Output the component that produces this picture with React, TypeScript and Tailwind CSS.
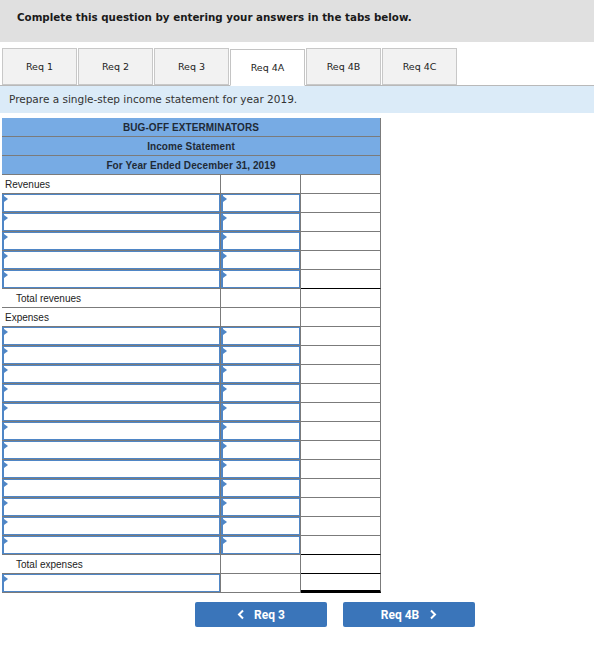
import React from 'react';

type Row =
  | { kind: 'label'; text: string; indent?: boolean; col3?: string }
  | { kind: 'input'; col3?: string }
  | { kind: 'final' };

const tabs = ['Req 1', 'Req 2', 'Req 3', 'Req 4A', 'Req 4B', 'Req 4C'];
const ACTIVE = 'Req 4A';

const rows: Row[] = [
  { kind: 'label', text: 'Revenues' },
  { kind: 'input' },
  { kind: 'input' },
  { kind: 'input' },
  { kind: 'input' },
  { kind: 'input', col3: 'border-b-black' },
  { kind: 'label', text: 'Total revenues', indent: true },
  { kind: 'label', text: 'Expenses' },
  ...Array.from({ length: 11 }, () => ({ kind: 'input' } as Row)),
  { kind: 'input', col3: 'border-b-black' },
  { kind: 'label', text: 'Total expenses', indent: true, col3: 'border-b-black' },
  { kind: 'final' },
];

function InputBox() {
  return (
    <div className="relative h-full w-full border border-l-2 border-[#4f86c6] bg-white">
      <span className="absolute left-0 top-[1px] h-0 w-0 border-y-[3px] border-l-[4px] border-y-transparent border-l-[#4f86c6]" />
    </div>
  );
}

function ChevronLeft() {
  return (
    <svg width="8" height="11" viewBox="0 0 8 11" fill="none">
      <path d="M6 1.5L2 5.5L6 9.5" stroke="white" strokeWidth="2" />
    </svg>
  );
}

function ChevronRight() {
  return (
    <svg width="8" height="11" viewBox="0 0 8 11" fill="none">
      <path d="M2 1.5L6 5.5L2 9.5" stroke="white" strokeWidth="2" />
    </svg>
  );
}

function StatementRow({ row }: { row: Row }) {
  const cell = 'h-[19px] border-b border-[#7b7b7b]';
  if (row.kind === 'label') {
    return (
      <div className="flex">
        <div className={`${cell} w-[219px] border-r flex items-center text-[10px] text-[#222] ${row.indent ? 'pl-[14px]' : 'pl-[3px]'}`}>
          {row.text}
        </div>
        <div className={`${cell} w-[80px] border-r`} />
        <div className={`${cell} w-[80px] border-r ${row.col3 ?? ''}`} />
      </div>
    );
  }
  if (row.kind === 'input') {
    return (
      <div className="flex">
        <div className={`${cell} w-[219px] border-r`}>
          <InputBox />
        </div>
        <div className={`${cell} w-[80px] border-r`}>
          <InputBox />
        </div>
        <div className={`${cell} w-[80px] border-r ${row.col3 ?? ''}`} />
      </div>
    );
  }
  return (
    <div className="flex">
      <div className={`${cell} w-[219px] border-r`}>
        <InputBox />
      </div>
      <div className={`${cell} w-[80px] border-r`} />
      <div className="h-[19px] w-[80px] border-r border-[#7b7b7b] border-b-[3px] border-b-black" />
    </div>
  );
}

export default function App() {
  return (
    <div className="w-[594px] h-[657px] bg-white" style={{ fontFamily: '"Liberation Sans", Arial, sans-serif' }}>
      <div className="h-[42px] bg-[#e0e0e0] pl-[17px] pt-[10px]">
        <p className="text-[10.3px] font-bold text-[#1a1a1a]" style={{ fontFamily: '"DejaVu Sans", Verdana, sans-serif' }}>
          Complete this question by entering your answers in the tabs below.
        </p>
      </div>

      <div className="mt-[7px] flex h-[37px] items-end border-b border-[#b9b9b9] pl-[2px]" style={{ fontFamily: '"DejaVu Sans", Verdana, sans-serif' }}>
        {tabs.map((t) => {
          const active = t === ACTIVE;
          return (
            <div
              key={t}
              className={`mr-px flex h-[37px] w-[75px] items-center justify-center border pt-[2px] text-[9.5px] text-[#222] ${
                active ? 'relative -mb-px border-[#c4c4c4] border-b-white bg-white' : 'border-[#c8c8c8] bg-[#f2f2f2]'
              }`}
            >
              {t}
            </div>
          );
        })}
      </div>

      <div className="flex h-[27px] items-center bg-[#dbebf8] pl-[9px] text-[10.5px] text-[#333]" style={{ fontFamily: '"DejaVu Sans", Verdana, sans-serif' }}>
        Prepare a single-step income statement for year 2019.
      </div>

      <div className="ml-[2px] mt-[5px] w-[379px]">
        {['BUG-OFF EXTERMINATORS', 'Income Statement', 'For Year Ended December 31, 2019'].map((h) => (
          <div
            key={h}
            className="flex h-[19px] items-center justify-center border-b border-r border-[#7b7b7b] bg-[#77abe4] text-[10px] font-bold tracking-[0.1px] text-[#1f2a36]"
          >
            {h}
          </div>
        ))}
        {rows.map((r, i) => (
          <StatementRow key={i} row={r} />
        ))}
      </div>

      <div className="ml-[195px] mt-[9px] flex gap-[16px]" style={{ fontFamily: 'Roboto, "Liberation Sans", sans-serif' }}>
        <button className="flex h-[25px] w-[132px] items-center justify-center gap-[9px] rounded-[2px] bg-[#3a75ba] text-[12px] font-bold text-white">
          <ChevronLeft />
          <span>Req 3</span>
        </button>
        <button className="flex h-[25px] w-[132px] items-center justify-center gap-[10px] rounded-[2px] bg-[#3a75ba] text-[12px] font-bold text-white">
          <span>Req 4B</span>
          <ChevronRight />
        </button>
      </div>
    </div>
  );
}
